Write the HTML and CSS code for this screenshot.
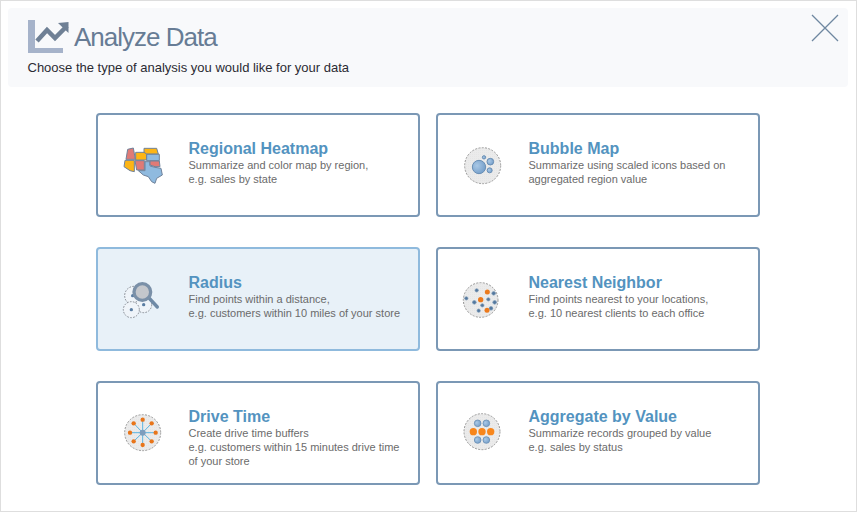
FILE: index.html
```html
<!DOCTYPE html>
<html lang="en">
<head>
<meta charset="utf-8">
<title>Analyze Data</title>
<link rel="stylesheet" href="styles.css">
</head>
<body>
<div class="modal">
  <svg class="defs" width="0" height="0" aria-hidden="true">
    <defs>
      <radialGradient id="ball" cx="0.35" cy="0.4" r="0.75">
        <stop offset="0" stop-color="#a9c8e6"/>
        <stop offset="1" stop-color="#6f9ac6"/>
      </radialGradient>
      <pattern id="dots" width="6" height="6" patternUnits="userSpaceOnUse">
        <rect width="6" height="6" fill="#ebebeb"/>
        <rect width="2" height="2" fill="#e0e0e0"/>
      </pattern>
    </defs>
  </svg>
  <header class="head">
    <div class="head-title">
      <svg class="logo" width="46" height="36" viewBox="0 0 46 36">
        <path d="M0 0h7v28h28v5H0z" fill="#a6b3ca"/>
        <path d="M9 21 19 10l8 8L39 6" fill="none" stroke="#6f8095" stroke-width="4.5"/>
        <path d="M30 3 40.500 2v11z" fill="#6f8095"/>
      </svg>
      <h1>Analyze Data</h1>
    </div>
    <p>Choose the type of analysis you would like for your data</p>
    <svg class="close" width="28" height="28" viewBox="0 0 28 28">
      <path d="M1 1 27 27M27 1 1 27" stroke="#6f87a0" stroke-width="1.3" fill="none"/>
    </svg>
  </header>
  <main class="grid">
    <article class="card">
      <svg class="ico" width="48" height="48" viewBox="57 63 144 144">
        <g stroke="#6f829b" stroke-width="3" stroke-linejoin="round">
          <path d="M83 88 100 84 106 118 78 118z" fill="#e07a76"/>
          <path d="M75 121H103V155L90 152 72 140z" fill="#fdb515"/>
          <path d="M107 97H140V120H107z" fill="#fdb515"/>
          <path d="M105 122H133V150H110z" fill="#e07a76"/>
          <path d="M132 85H170L175 102H140L132 97z" fill="#fdb515"/>
          <path d="M140 103H178V122H140z" fill="#8fbadf"/>
          <path d="M135 125H150V138L165 142 183 145 187 165 170 175 165 190 155 185 145 170 130 165 115 152H135z" fill="#8fbadf"/>
          <path d="M150 123H178L180 140 165 140 150 135z" fill="#e07a76"/>
        </g>
      </svg>
      <div class="text">
        <h2>Regional Heatmap</h2>
        <p>Summarize and color map by region,<br>e.g. sales by state</p>
      </div>
    </article>
    <article class="card">
      <svg class="ico" width="48" height="48" viewBox="57 63 144 144">
        <circle cx="128" cy="137" r="54" fill="url(#dots)" stroke="#999" stroke-width="3" stroke-dasharray="6 4"/>
        <g fill="url(#ball)" stroke="#6a8fb5" stroke-width="3">
          <circle cx="117" cy="141" r="20"/>
          <circle cx="151" cy="125" r="10"/>
          <circle cx="149" cy="151" r="7.5"/>
          <circle cx="132" cy="112" r="5"/>
        </g>
      </svg>
      <div class="text">
        <h2>Bubble Map</h2>
        <p>Summarize using scaled icons based on<br>aggregated region value</p>
      </div>
    </article>
    <article class="card active">
      <svg class="ico" width="48" height="48" viewBox="57 45 144 144">
        <g fill="#eff4f9" stroke="#858a92" stroke-width="3" stroke-dasharray="5 4">
          <circle cx="102" cy="107" r="28"/>
          <circle cx="131" cy="134" r="24"/>
          <circle cx="94" cy="149" r="24"/>
        </g>
        <g fill="#5b7ea3">
          <circle cx="98" cy="107" r="5"/>
          <circle cx="131" cy="134" r="5"/>
          <circle cx="94" cy="149" r="5"/>
        </g>
        <path d="M147 114 172 141" stroke="#6f8aa6" stroke-width="10" stroke-linecap="round"/>
        <circle cx="127" cy="96" r="25" fill="#c4c7cc" stroke="#7a90a8" stroke-width="10"/>
      </svg>
      <div class="text">
        <h2>Radius</h2>
        <p>Find points within a distance,<br>e.g. customers within 10 miles of your store</p>
      </div>
    </article>
    <article class="card">
      <svg class="ico" width="48" height="48" viewBox="57 45 144 144">
        <circle cx="122" cy="120" r="52" fill="url(#dots)" stroke="#999" stroke-width="3" stroke-dasharray="6 4"/>
        <g fill="#54789e" stroke="#7d9bb8" stroke-width="2">
          <circle cx="110" cy="91" r="5"/>
          <circle cx="161" cy="100" r="5.5"/>
          <circle cx="79" cy="115" r="5"/>
          <circle cx="103" cy="127" r="5.5"/>
          <circle cx="145" cy="118" r="5"/>
          <circle cx="164" cy="127" r="5.5"/>
          <circle cx="127" cy="136" r="5"/>
          <circle cx="116" cy="152" r="5"/>
          <circle cx="153" cy="145" r="5.5"/>
        </g>
        <g fill="#ec7a1c">
          <circle cx="142" cy="96" r="7.5"/>
          <circle cx="122" cy="119" r="8"/>
          <circle cx="141" cy="151" r="7.5"/>
        </g>
      </svg>
      <div class="text">
        <h2>Nearest Neighbor</h2>
        <p>Find points nearest to your locations,<br>e.g. 10 nearest clients to each office</p>
      </div>
    </article>
    <article class="card">
      <svg class="ico" width="48" height="48" viewBox="57 42 144 144">
        <circle cx="128" cy="113" r="54" fill="url(#dots)" stroke="#999" stroke-width="3" stroke-dasharray="6 4"/>
        <path d="M128 113V74M128 113 155 85M128 113H167M128 113 155 139M128 113V150M128 113 101 139M128 113H90M128 113 101 85" stroke="#3fa9e0" stroke-width="2.5" fill="none"/>
        <circle cx="128" cy="113" r="9" fill="#7e9dbd"/>
        <g fill="#e8751a">
          <circle cx="128" cy="74" r="6.500"/>
          <circle cx="155" cy="85" r="6.500"/>
          <circle cx="167" cy="113" r="6.500"/>
          <circle cx="155" cy="139" r="6.500"/>
          <circle cx="128" cy="150" r="6.500"/>
          <circle cx="101" cy="139" r="6.500"/>
          <circle cx="90" cy="113" r="6.500"/>
          <circle cx="101" cy="85" r="6.500"/>
        </g>
      </svg>
      <div class="text">
        <h2>Drive Time</h2>
        <p>Create drive time buffers<br>e.g. customers within 15 minutes drive time<br>of your store</p>
      </div>
    </article>
    <article class="card">
      <svg class="ico" width="48" height="48" viewBox="57 42 144 144">
        <circle cx="126" cy="110" r="54" fill="url(#dots)" stroke="#999" stroke-width="3" stroke-dasharray="6 4"/>
        <g fill="url(#ball)" stroke="#6a8fb5" stroke-width="2.5">
          <circle cx="113" cy="85" r="10"/>
          <circle cx="139" cy="85" r="10"/>
          <circle cx="113" cy="135" r="10"/>
          <circle cx="139" cy="135" r="10"/>
        </g>
        <g fill="#f7861c">
          <circle cx="100" cy="110" r="11"/>
          <circle cx="126" cy="110" r="11"/>
          <circle cx="152" cy="110" r="11"/>
        </g>
      </svg>
      <div class="text">
        <h2>Aggregate by Value</h2>
        <p>Summarize records grouped by value<br>e.g. sales by status</p>
      </div>
    </article>
  </main>
</div>
</body>
</html>
```
FILE: styles.css
```css
* { box-sizing: border-box; }
html, body { margin: 0; height: 100%; }
body { background: #fff; font-family: "Liberation Sans", Arial, sans-serif; }
.modal {
  width: 857px;
  height: 512px;
  border: 1px solid #dedede;
  padding: 7px;
  position: relative;
}
.defs { position: absolute; }
.head {
  position: relative;
  height: 79px;
  width: 840px;
  background: #f8f9fb;
  border-radius: 4px;
  padding: 12px 20px 0 19.5px;
}
.head-title { display: flex; align-items: flex-start; height: 40px; }
.logo { flex: none; margin-left: 0.5px; }
.head h1 {
  margin: 1px 0 0;
  font-size: 26px;
  line-height: 32px;
  font-weight: 400;
  letter-spacing: -1px;
  color: #677c95;
}
.head p {
  margin: 0;
  font-size: 13px;
  line-height: 16px;
  color: #2b2b33;
}
.close { position: absolute; right: 9px; top: 6px; }
.grid {
  display: grid;
  grid-template-columns: 324px 324px;
  grid-auto-rows: 104px;
  column-gap: 16px;
  row-gap: 30px;
  margin: 26px 0 0 88px;
}
.card {
  display: flex;
  align-items: flex-start;
  border: 2px solid #7b98b5;
  border-radius: 4px;
  background: #fff;
  padding: 23px 10px 0 21px;
}
.card.active { background: #e8f1f8; border-color: #8fbadd; }
.ico { flex: none; margin: 3px 21.5px 0 0; }
.text { flex: 1; min-width: 0; }
.text h2 {
  margin: 0;
  font-size: 16px;
  line-height: 22px;
  font-weight: 700;
  color: #5393c0;
}
.text p {
  margin: -2px 0 0;
  font-size: 11px;
  line-height: 14px;
  color: #6b6b6b;
}
```
